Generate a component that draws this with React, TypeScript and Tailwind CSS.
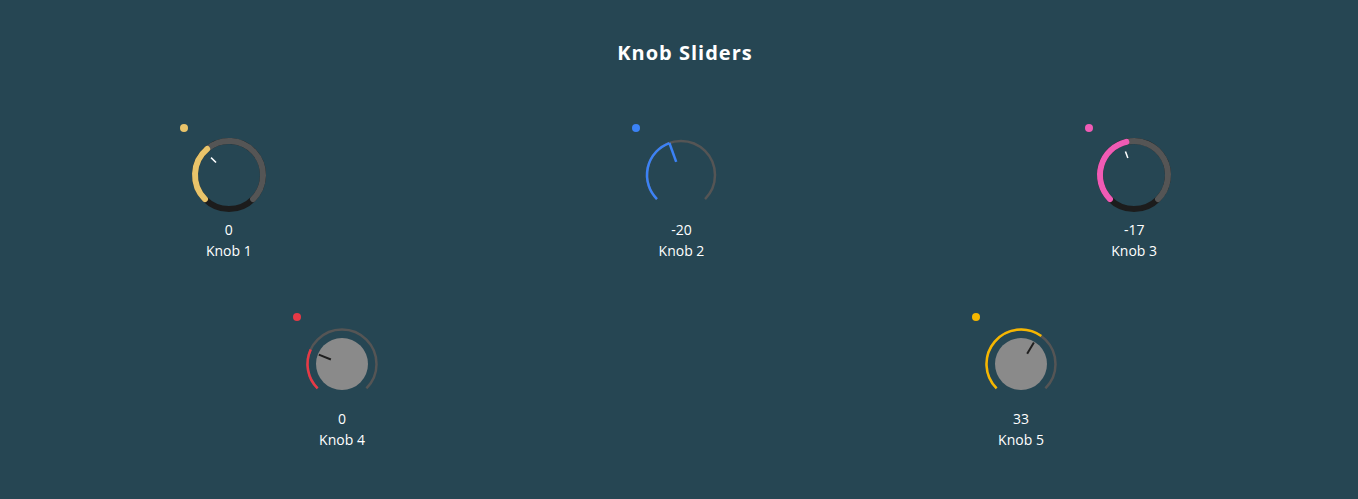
const polar = (r: number, deg: number) => {
  const a = ((deg - 90) * Math.PI) / 180;
  return [40 + r * Math.cos(a), 40 + r * Math.sin(a)];
};

const arc = (r: number, from: number, to: number) => {
  const [x1, y1] = polar(r, from);
  const [x2, y2] = polar(r, to);
  const large = to - from > 180 ? 1 : 0;
  return `M ${x1} ${y1} A ${r} ${r} 0 ${large} 1 ${x2} ${y2}`;
};

type Knob = {
  name: string;
  value: number;
  color: string;
  style: "ring" | "thin" | "solid";
  end: number;
  pointer: number;
};

const Dial = ({ k }: { k: Knob }) => {
  if (k.style === "ring") {
    const [a1, b1] = polar(25, k.pointer);
    const [a2, b2] = polar(18, k.pointer);
    return (
      <svg width="80" height="80" viewBox="0 0 80 80">
        <circle cx="40" cy="40" r="34" fill="none" stroke="#1c1c1c" strokeWidth="6" />
        <path d={arc(34, k.end, 135)} fill="none" stroke="#555555" strokeWidth="6" strokeLinecap="round" />
        <path d={arc(34, -135, k.end)} fill="none" stroke={k.color} strokeWidth="6" strokeLinecap="round" />
        <line x1={a1} y1={b1} x2={a2} y2={b2} stroke="#ffffff" strokeWidth="1.5" />
      </svg>
    );
  }
  if (k.style === "thin") {
    const [a1, b1] = polar(34, k.pointer);
    const [a2, b2] = polar(14, k.pointer);
    return (
      <svg width="80" height="80" viewBox="0 0 80 80">
        <path d={arc(34, -135, 135)} fill="none" stroke="#555555" strokeWidth="2.5" />
        <path d={arc(34, -135, k.end)} fill="none" stroke={k.color} strokeWidth="2.5" />
        <line x1={a1} y1={b1} x2={a2} y2={b2} stroke={k.color} strokeWidth="2.5" />
      </svg>
    );
  }
  const [a1, b1] = polar(25, k.pointer);
  const [a2, b2] = polar(12, k.pointer);
  return (
    <svg width="80" height="80" viewBox="0 0 80 80">
      <path d={arc(34.5, -135, 135)} fill="none" stroke="#555555" strokeWidth="2.5" />
      <path d={arc(34.5, -135, k.end)} fill="none" stroke={k.color} strokeWidth="2.5" />
      <circle cx="40" cy="40" r="26" fill="#8a8a8a" />
      <line x1={a1} y1={b1} x2={a2} y2={b2} stroke="#1f1f1f" strokeWidth="2" />
    </svg>
  );
};

const KnobItem = ({ k }: { k: Knob }) => (
  <div className="ml-[5px] flex flex-col items-center">
    <div className="relative">
      <span
        className="absolute -left-[9px] -top-[11px] h-2 w-2 rounded-full"
        style={{ backgroundColor: k.color }}
      />
      <Dial k={k} />
    </div>
    <div className="mt-[5px] text-sm leading-5 text-white">{k.value}</div>
    <div className="mt-px text-sm leading-5 text-white">{k.name}</div>
  </div>
);

const row1: Knob[] = [
  { name: "Knob 1", value: 0, color: "#e9c46a", style: "ring", end: -40, pointer: -46 },
  { name: "Knob 2", value: -20, color: "#3b82f6", style: "thin", end: -20, pointer: -20 },
  { name: "Knob 3", value: -17, color: "#f05bb5", style: "ring", end: -13, pointer: -20 },
];

const row2: Knob[] = [
  { name: "Knob 4", value: 0, color: "#e63946", style: "solid", end: -65, pointer: -68 },
  { name: "Knob 5", value: 33, color: "#f5b700", style: "solid", end: 36, pointer: 31 },
];

export default function App() {
  return (
    <div
      className="min-h-[499px] bg-[#264653] pt-[39px] text-white"
      style={{ fontFamily: '"Open Sans", "Noto Sans", sans-serif' }}
    >
      <h1 className="pl-3 text-center text-xl leading-7 font-bold tracking-[1px]">Knob Sliders</h1>
      <div className="mt-[68px] flex justify-around">
        {row1.map((k) => (
          <KnobItem key={k.name} k={k} />
        ))}
      </div>
      <div className="mt-[63px] flex justify-around">
        {row2.map((k) => (
          <KnobItem key={k.name} k={k} />
        ))}
      </div>
    </div>
  );
}
